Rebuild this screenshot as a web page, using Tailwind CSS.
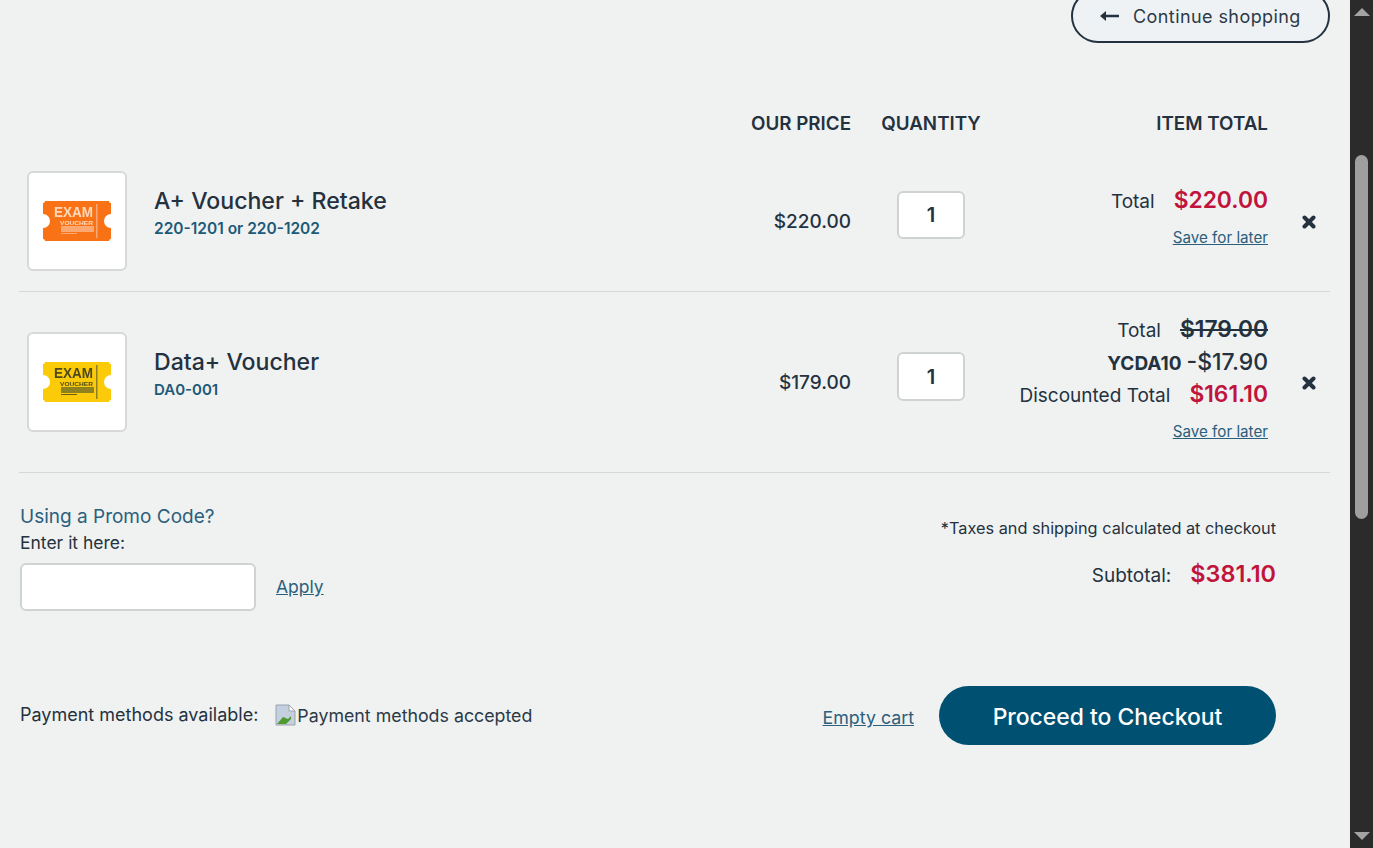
<!DOCTYPE html>
<html lang="en">
<head>
  <meta charset="UTF-8" />
  <title>Your Cart</title>
  <script src="https://cdn.jsdelivr.net/npm/@tailwindcss/browser@4"></script>
</head>
<body class="h-[848px] overflow-hidden flex bg-[#f0f1f1] text-[#24323f] font-['Inter',sans-serif]">

<main class="w-[1350px] h-[848px] overflow-hidden shrink-0 pl-[19px] pr-[20px]">
  <!-- top link -->
  <div class="flex justify-end">
    <a class="-mt-[11px] w-[259px] h-[54px] rounded-full border-2 border-[#24323f] flex items-center pl-[27px] gap-[14px] text-[18px] tracking-[0.42px] text-[#2b3a46] bg-[#eff2f5]">
      <svg class="w-[19px] h-[12px]" viewBox="0 0 19 12"><path d="M0 6l6-5v3.800h13v2.400H6V11z" fill="#24323f"/></svg>
      Continue shopping
    </a>
  </div>

  <!-- column heads -->
  <div class="grid grid-cols-[716px_116px_140px_277px_62px] mt-[69px] text-[18.800px] leading-[24px] font-semibold">
    <div></div>
    <div class="text-right whitespace-nowrap">OUR PRICE</div>
    <div class="text-center pl-[20px] whitespace-nowrap">QUANTITY</div>
    <div class="text-right">ITEM TOTAL</div>
    <div></div>
  </div>

  <!-- row 1 -->
  <div class="grid grid-cols-[716px_116px_140px_277px_62px] h-[156px] pt-[35px] border-b border-[#d5d8d9] items-start">
    <div class="flex items-center pl-[8px] h-[100px]">
      <div class="w-[100px] h-[100px] bg-white border-2 border-[#d6d8d9] rounded-[6px] flex items-center justify-center">
        <svg class="w-[68px] h-[40px] blur-[0.3px]" viewBox="0 0 68 40">
          <path d="M2 0h64a2 2 0 0 0 2 2v11a7 7 0 0 0 0 14v11a2 2 0 0 0-2 2H2a2 2 0 0 0-2-2V27a7 7 0 0 0 0-14V2a2 2 0 0 0 2-2z" fill="#f97316"/>
          <text x="11" y="16" font-family="Liberation Sans" font-size="14.500" font-weight="700" fill="#fcd9bd" textLength="39" lengthAdjust="spacingAndGlyphs">EXAM</text>
          <text x="17" y="23.500" font-family="Liberation Sans" font-size="5" font-weight="700" fill="#fcd9bd" textLength="33" lengthAdjust="spacingAndGlyphs">VOUCHER</text>
          <rect x="18" y="25" width="33" height="6" fill="#fba873"/>
          <rect x="18" y="32" width="16" height="1" fill="#fba873"/>
          <rect x="53" y="3" width="1.500" height="34" fill="#fba873"/>
        </svg>
      </div>
      <div class="ml-[27px] -mt-[14px]">
        <div class="text-[23.100px] leading-[30px] font-medium">A+ Voucher + Retake</div>
        <div class="text-[15.500px] leading-[26px] font-semibold text-[#1c5a78]">220-1201 or 220-1202</div>
      </div>
    </div>
    <div class="text-right text-[19px] leading-[24px] font-medium mt-[39px]">$220.00</div>
    <div class="pl-[46px] mt-[20px]">
      <div class="w-[68px] h-[48px] bg-white border-2 border-[#d0d3d4] rounded-[6px] flex items-center justify-center text-[20px] font-semibold">1</div>
    </div>
    <div class="text-right">
      <div class="flex justify-end items-baseline gap-[19px] text-[19px] leading-[26px] mt-[16px]">
        <span>Total</span><span class="text-[22.800px] font-semibold text-[#c0143c]">$220.00</span>
      </div>
      <div class="mt-[10px]"><a class="text-[15.200px] leading-[20px] underline text-[#2b607c]">Save for later</a></div>
    </div>
    <div class="flex justify-end pr-[14px] mt-[44px]">
      <svg class="w-[14px] h-[14px]" viewBox="0 0 14 14"><path d="M2.500 2.500l9 9m0-9l-9 9" stroke="#24323f" stroke-width="4" stroke-linecap="round"/></svg>
    </div>
  </div>

  <!-- row 2 -->
  <div class="grid grid-cols-[716px_116px_140px_277px_62px] h-[181px] pt-[21px] border-b border-[#d5d8d9] items-start">
    <div class="flex items-center pl-[8px] pt-[19px] h-[119px]">
      <div class="w-[100px] h-[100px] bg-white border-2 border-[#d6d8d9] rounded-[6px] flex items-center justify-center">
        <svg class="w-[68px] h-[40px] blur-[0.3px]" viewBox="0 0 68 40">
          <path d="M2 0h64a2 2 0 0 0 2 2v11a7 7 0 0 0 0 14v11a2 2 0 0 0-2 2H2a2 2 0 0 0-2-2V27a7 7 0 0 0 0-14V2a2 2 0 0 0 2-2z" fill="#fbcb0a"/>
          <text x="11" y="16" font-family="Liberation Sans" font-size="14.500" font-weight="700" fill="#4e4a1c" textLength="39" lengthAdjust="spacingAndGlyphs">EXAM</text>
          <text x="17" y="23.500" font-family="Liberation Sans" font-size="5" font-weight="700" fill="#4e4a1c" textLength="33" lengthAdjust="spacingAndGlyphs">VOUCHER</text>
          <rect x="18" y="25" width="33" height="6" fill="#8f8120"/>
          <rect x="18" y="32" width="16" height="1" fill="#6a6018"/>
          <rect x="53" y="3" width="1.500" height="34" fill="#8f8120"/>
        </svg>
      </div>
      <div class="ml-[27px] -mt-[14px]">
        <div class="text-[23.100px] leading-[30px] font-medium">Data+ Voucher</div>
        <div class="text-[15px] leading-[26px] font-semibold text-[#1c5a78]">DA0-001</div>
      </div>
    </div>
    <div class="text-right text-[19px] leading-[24px] font-medium mt-[58px]">$179.00</div>
    <div class="pl-[46px] mt-[39px]">
      <div class="w-[68px] h-[49px] bg-white border-2 border-[#d0d3d4] rounded-[6px] flex items-center justify-center text-[20px] font-semibold">1</div>
    </div>
    <div class="text-right">
      <div class="flex justify-end items-baseline gap-[19px] text-[19px] leading-[32px]">
        <span>Total</span><span class="text-[22.800px] font-semibold line-through">$179.00</span>
      </div>
      <div class="flex justify-end items-baseline gap-[5px] leading-[32px] -mt-[1px]">
        <span class="text-[19px] font-bold">YCDA10</span><span class="text-[23px] font-medium">-$17.90</span>
      </div>
      <div class="flex justify-end items-baseline gap-[19px] text-[19px] leading-[34px] -mt-[3px]">
        <span>Discounted Total</span><span class="text-[22.800px] font-semibold text-[#c0143c]">$161.10</span>
      </div>
      <div class="mt-[6px]"><a class="text-[15.200px] leading-[20px] underline text-[#2b607c]">Save for later</a></div>
    </div>
    <div class="flex justify-end pr-[14px] mt-[63px]">
      <svg class="w-[14px] h-[14px]" viewBox="0 0 14 14"><path d="M2.500 2.500l9 9m0-9l-9 9" stroke="#24323f" stroke-width="4" stroke-linecap="round"/></svg>
    </div>
  </div>

  <!-- promo + subtotal -->
  <div class="flex justify-between pl-[1px] pr-[54px] pt-[30px]">
    <div>
      <div class="text-[19px] leading-[28px] text-[#2b607c]">Using a Promo Code?</div>
      <div class="text-[17.500px] leading-[24px]">Enter it here:</div>
      <div class="flex items-center gap-[20px] mt-[8px]">
        <input class="w-[236px] h-[48px] bg-white border-2 border-[#d0d3d4] rounded-[6px]" />
        <a class="text-[17.500px] underline text-[#2b607c] mt-[1px]">Apply</a>
      </div>
    </div>
    <div class="text-right pt-[12px]">
      <div class="text-[16.300px] leading-[26px]">*Taxes and shipping calculated at checkout</div>
      <div class="flex justify-end items-baseline gap-[19px] mt-[15px]">
        <span class="text-[19px]">Subtotal:</span><span class="text-[23.400px] font-semibold text-[#c0143c]">$381.10</span>
      </div>
    </div>
  </div>

  <!-- bottom -->
  <div class="flex justify-between items-center pl-[1px] pr-[54px] mt-[75px]">
    <div class="flex items-center gap-[17px] text-[18px]">
      <span class="-mt-[3px]">Payment methods available:</span>
      <span class="flex items-center mt-[1px] text-[17.800px] text-[#2b3a46]">
        <svg class="w-[22px] h-[22px] -mt-[3px]" viewBox="0 0 22 22">
          <path d="M1 1h13l6 6v14H1z" fill="#c4cfe0" stroke="#9ba3ad"/>
          <path d="M14 1v6h6z" fill="#fff" stroke="#9ba3ad"/>
          <path d="M2 20l6-7 5 2 3-3v3l-5 5z" fill="#4e9a2e"/>
        </svg>
        Payment methods accepted
      </span>
    </div>
    <div class="flex items-center gap-[25px]">
      <a class="text-[17.800px] underline text-[#2b607c] mt-[6px]">Empty cart</a>
      <a class="w-[337px] h-[59px] pt-[3px] rounded-full bg-[#005072] text-white text-[22.900px] font-medium flex items-center justify-center">Proceed to Checkout</a>
    </div>
  </div>
</main>

<!-- scrollbar -->
<div class="w-[23px] h-[848px] bg-[#2b2b2b] flex flex-col items-center py-[8px]">
  <svg class="w-[16px] h-[8px]" viewBox="0 0 16 8"><path d="M8 0l8 8H0z" fill="#a3a3a3"/></svg>
  <div class="w-[13px] h-[364px] rounded-full bg-[#9f9f9f] mt-[139px]"></div>
  <svg class="w-[16px] h-[8px] mt-auto" viewBox="0 0 16 8"><path d="M8 8L0 0h16z" fill="#a3a3a3"/></svg>
</div>

</body>
</html>
